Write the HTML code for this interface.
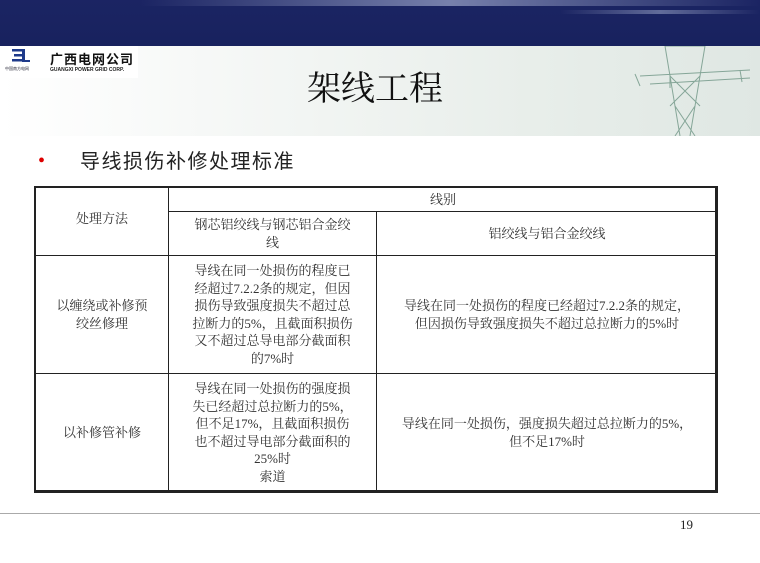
<!DOCTYPE html>
<html><head><meta charset="utf-8"><style>
*{margin:0;padding:0;box-sizing:border-box}
body{width:760px;height:563px;position:relative;background:#fff;overflow:hidden;font-family:"Liberation Serif","Noto Serif CJK SC",serif}
.a{position:absolute}
.band{left:0;top:0;width:760px;height:46px;background:linear-gradient(180deg,#1b2463 0%,#18225e 100%)}
.hdr{left:0;top:46px;width:760px;height:90px;background:linear-gradient(90deg,#fff 0%,#f2f5f3 40%,#e8eeea 70%,#dfe7e3 100%)}
.c{position:absolute;color:#333;font-size:13px;line-height:17.5px;text-align:center;display:flex;align-items:center;justify-content:center}
.h{background:#222}
.v{background:#222}
</style></head><body>
<div class="a band"></div>
<div class="a" style="left:140px;top:0;width:620px;height:6px;background:linear-gradient(90deg,rgba(255,255,255,0),rgba(180,190,220,.6),rgba(255,255,255,0))"></div>
<div class="a" style="left:560px;top:10px;width:200px;height:4px;background:linear-gradient(90deg,rgba(255,255,255,0),rgba(170,180,210,.5),rgba(255,255,255,0))"></div>
<div class="a hdr"></div>
<div class="a" style="left:0;top:46px;width:138px;height:32px;background:#fff"></div>
<svg class="a" style="left:8px;top:48px" width="30" height="16"><g fill="#1e3a8a"><rect x="4" y="1" width="10" height="2.5"/><rect x="6" y="6" width="8" height="2.5"/><rect x="4" y="11" width="10" height="2.5"/><rect x="14" y="1" width="3" height="13"/><rect x="17" y="12" width="5" height="2"/></g></svg>
<div class="a" style="left:5px;top:66px;font-size:4px;color:#223;font-family:'Liberation Sans',sans-serif">中国南方电网</div>
<div class="a" style="left:50px;top:49px;font-size:13px;font-weight:bold;color:#111;font-family:'Liberation Sans','Noto Sans CJK SC',sans-serif;letter-spacing:1px">广西电网公司</div>
<div class="a" style="left:50px;top:67px;font-size:5px;color:#222;font-family:'Liberation Sans',sans-serif;font-weight:bold">GUANGXI POWER GRID CORP.</div>
<svg class="a" style="left:630px;top:46px" width="130" height="90" stroke="#5f8a78" fill="none" stroke-width="1" opacity=".7">
<path d="M10 30 L120 24 M20 38 L120 32 M35 0 L50 90 M75 0 L60 90 M35 0 L75 0 M40 30 L70 60 M70 30 L40 60 M45 60 L65 90 M65 60 L45 90 M5 28 L10 40 M40 28 L40 42 M110 24 L112 36"/>
</svg>
<div class="a" style="left:307px;top:68px;font-size:34px;line-height:44px;color:#111;font-family:'Liberation Serif','Noto Serif CJK SC',serif">架线工程</div>
<div class="a" style="left:38px;top:150px;color:#d00;font-size:20px">•</div>
<div class="a" style="left:80px;top:149px;font-size:20px;line-height:26px;color:#222;letter-spacing:1.5px;font-family:'Liberation Sans','Noto Sans CJK SC',sans-serif">导线损伤补修处理标准</div>

<div class="a" style="left:34px;top:186px;width:684px;height:307px;border:2px solid #222;border-right-width:3px;border-bottom-width:3px"></div>
<div class="a h" style="left:168px;top:211px;width:550px;height:1px"></div>
<div class="a h" style="left:34px;top:255px;width:684px;height:1px"></div>
<div class="a h" style="left:34px;top:373px;width:684px;height:1px"></div>
<div class="a v" style="left:168px;top:186px;width:1px;height:307px"></div>
<div class="a v" style="left:376px;top:211px;width:1px;height:282px"></div>

<div class="c" style="left:36px;top:188px;width:132px;height:67px;padding-bottom:6px">处理方法</div>
<div class="c" style="left:169px;top:188px;width:548px;height:23px">线别</div>
<div class="c" style="left:169px;top:212px;width:207px;height:43px">钢芯铝绞线与钢芯铝合金绞<br>线</div>
<div class="c" style="left:377px;top:212px;width:340px;height:43px">铝绞线与铝合金绞线</div>
<div class="c" style="left:36px;top:256px;width:132px;height:117px">以缠绕或补修预<br>绞丝修理</div>
<div class="c" style="left:169px;top:256px;width:207px;height:117px">导线在同一处损伤的程度已<br>经超过7.2.2条的规定，但因<br>损伤导致强度损失不超过总<br>拉断力的5%，且截面积损伤<br>又不超过总导电部分截面积<br>的7%时</div>
<div class="c" style="left:377px;top:256px;width:340px;height:117px">导线在同一处损伤的程度已经超过7.2.2条的规定，<br>但因损伤导致强度损失不超过总拉断力的5%时</div>
<div class="c" style="left:36px;top:374px;width:132px;height:117px">以补修管补修</div>
<div class="c" style="left:169px;top:374px;width:207px;height:117px">导线在同一处损伤的强度损<br>失已经超过总拉断力的5%，<br>但不足17%，且截面积损伤<br>也不超过导电部分截面积的<br>25%时<br>索道</div>
<div class="c" style="left:377px;top:374px;width:340px;height:117px">导线在同一处损伤，强度损失超过总拉断力的5%，<br>但不足17%时</div>

<div class="a" style="left:0;top:513px;width:760px;height:1px;background:#aaa"></div>
<div class="a" style="left:680px;top:517px;font-size:13px;color:#222">19</div>
</body></html>
